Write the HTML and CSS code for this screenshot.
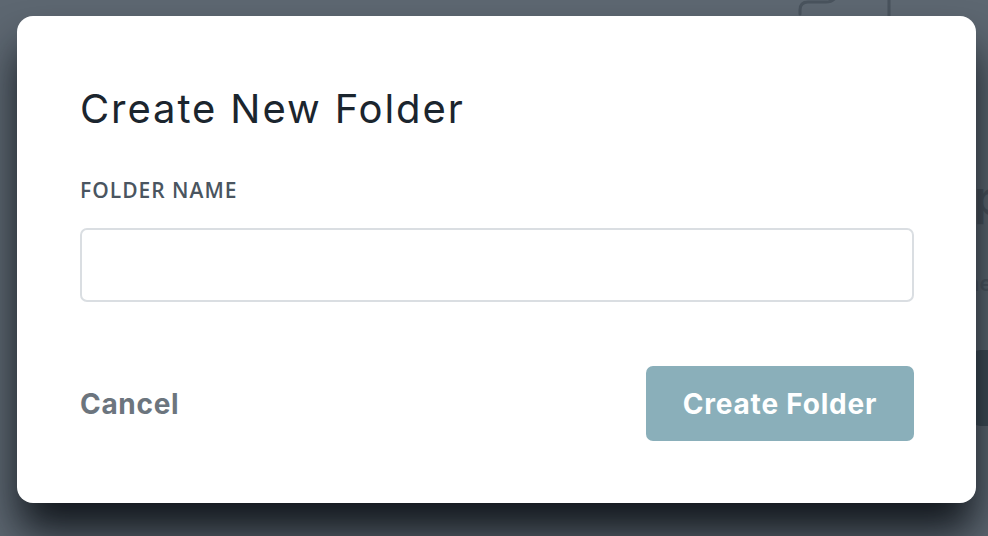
FILE: index.html
```html
<!DOCTYPE html>
<html lang="en">
<head>
  <meta charset="UTF-8" />
  <meta name="viewport" content="width=device-width, initial-scale=1.0"/>
  <title>Create New Folder</title>
  <link rel="stylesheet" href="styles.css">
</head>
<body>

<!-- page behind the overlay, only the bits that peek out -->
<div id="backdrop">
  <svg class="bg-icon" width="100" height="20" viewBox="0 0 100 20">
    <path d="M2 14 V10 Q2 2 10 2 H28 Q36 2 40 -6" fill="none" stroke="#49535d" stroke-width="3" stroke-linecap="round"/>
    <path d="M91 -4 V18" fill="none" stroke="#49535d" stroke-width="3" stroke-linecap="round"/>
  </svg>
  <div class="bg-heading">p</div>
  <div class="bg-text">ne</div>
  <div class="bg-block"></div>
</div>

<div id="modal">
  <h2 class="modal-title">Create New Folder</h2>
  <label class="field-label" for="folder-name">FOLDER NAME</label>
  <input id="folder-name" class="field-input" type="text" />
  <div class="modal-actions">
    <button class="btn-cancel">Cancel</button>
    <button class="btn-create">Create Folder</button>
  </div>
</div>

</body>
</html>
```

FILE: styles.css
```css
* { box-sizing: border-box; margin: 0; padding: 0; }
body {
  font-family: Inter, "Liberation Sans", sans-serif;
  background: #5d6771;
  overflow: hidden;
  width: 988px;
  height: 536px;
  position: relative;
}
#backdrop {
  position: absolute;
  inset: 0;
}
.bg-icon {
  position: absolute;
  left: 798px;
  top: 0;
}
.bg-heading {
  position: absolute;
  left: 974px;
  top: 168px;
  font-size: 48px;
  font-weight: 600;
  color: #49535d;
}
.bg-text {
  position: absolute;
  left: 966px;
  top: 270px;
  font-size: 22px;
  font-weight: 600;
  color: #4e5862;
}
.bg-block {
  position: absolute;
  left: 970px;
  top: 350px;
  width: 60px;
  height: 76px;
  border-radius: 10px;
  background: #3e4c56;
}
#modal {
  position: absolute;
  left: 17px;
  top: 16px;
  width: 959px;
  height: 487px;
  background: #fff;
  border-radius: 16px;
  padding: 69px 62px 62px 63px;
  display: flex;
  flex-direction: column;
  box-shadow: 0 30px 42px -2px rgba(10, 14, 20, 0.9);
}
.modal-title {
  font-size: 40px;
  font-weight: 400;
  color: #1b252e;
  line-height: 48px;
  letter-spacing: 1.9px;
}
.field-label {
  margin-top: 45px;
  font-family: "Open Sans", sans-serif;
  font-size: 21px;
  font-weight: 600;
  color: #4a5560;
  line-height: 24px;
  letter-spacing: 1px;
}
.field-input {
  margin-top: 26px;
  height: 74px;
  border: 2px solid #dadee2;
  border-radius: 7px;
  font-size: 20px;
  padding: 0 18px;
  outline: none;
}
.modal-actions {
  margin-top: auto;
  display: flex;
  justify-content: space-between;
  align-items: center;
}
.btn-cancel {
  font-family: Inter, sans-serif;
  background: none;
  border: none;
  font-size: 28px;
  font-weight: 700;
  letter-spacing: 0.7px;
  color: #6c757e;
  cursor: pointer;
}
.btn-create {
  font-family: Inter, sans-serif;
  width: 268px;
  height: 75px;
  border: none;
  border-radius: 7px;
  background: #8aafba;
  color: #fff;
  font-size: 28px;
  font-weight: 700;
  letter-spacing: 0.8px;
  cursor: pointer;
}
```
